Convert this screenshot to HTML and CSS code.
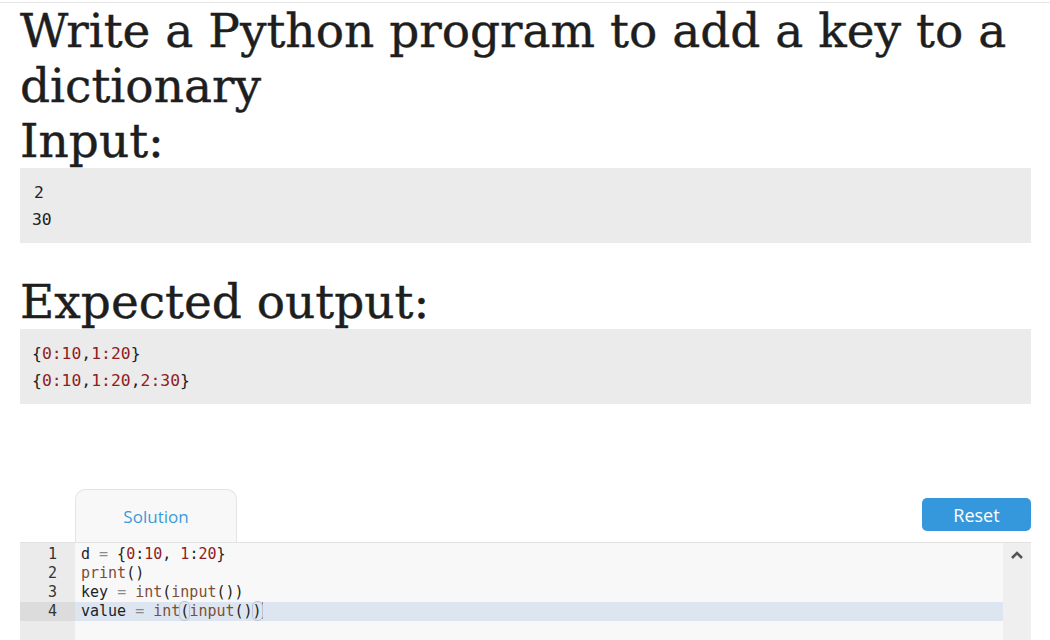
FILE: index.html
```html
<!DOCTYPE html>
<html>
<head>
<meta charset="utf-8">
<link rel="stylesheet" href="styles.css">
</head>
<body>
<div class="topline"></div>
<main class="page">
  <h1 class="title">Write a Python program to add a key to a dictionary</h1>
  <h2 class="heading">Input:</h2>
  <pre class="sample"><span class="pad2">2</span>
30</pre>
  <h2 class="heading spaced">Expected output:</h2>
  <pre class="sample"><span class="br">{</span><span class="num">0:10</span><span class="br">,</span><span class="num">1:20</span><span class="br">}</span>
<span class="br">{</span><span class="num">0:10</span><span class="br">,</span><span class="num">1:20</span><span class="br">,</span><span class="num">2:30</span><span class="br">}</span></pre>

  <section class="playground">
    <div class="tabbar">
      <div class="tab">Solution</div>
      <button class="reset">Reset</button>
    </div>
    <div class="editor">
      <div class="gutter">
        <div class="ln">1</div>
        <div class="ln">2</div>
        <div class="ln">3</div>
        <div class="ln active">4</div>
      </div>
      <div class="code">
        <div class="line">d <span class="op">=</span> {<span class="num">0</span>:<span class="num">10</span>, <span class="num">1</span>:<span class="num">20</span>}</div>
        <div class="line"><span class="fn">print</span>()</div>
        <div class="line">key <span class="op">=</span> <span class="fn">int</span>(<span class="fn">input</span>())</div>
        <div class="line active">value <span class="op">=</span> <span class="fn">int</span><span class="match">(</span><span class="fn">input</span>()<span class="match">)</span><span class="cursor"></span></div>
      </div>
      <div class="scrollbar">
        <svg class="chev" width="14" height="10" viewBox="0 0 14 10"><path d="M2 8 L7 3 L12 8" fill="none" stroke="#555" stroke-width="2.6"/></svg>
      </div>
    </div>
  </section>
</main>
</body>
</html>
```
FILE: styles.css
```css
html, body {
  margin: 0;
  padding: 0;
  background: #fff;
}
.topline {
  height: 2px;
  border-bottom: 1px solid #e6e6e6;
}
.page {
  padding: 0 19px 0 20px;
}
.title, .heading {
  font-family: "DejaVu Serif", "Liberation Serif", serif;
  font-weight: normal;
  font-size: 47px;
  line-height: 55px;
  color: #1e1e1e;
  margin: 0;
  -webkit-text-stroke: 0.4px #1e1e1e;
}
.heading.spaced {
  margin-top: 31px;
}
.sample {
  margin: 0;
  background: #ebebeb;
  font-family: "DejaVu Sans Mono", "Liberation Mono", monospace;
  font-size: 16.4px;
  line-height: 27px;
  color: #222;
  padding: 11px 12px 10px 12px;
  height: 54px;
}
.pad2 { padding-left: 2px; }
.sample .num { color: #8f1d22; }
.sample .br { color: #222; }

.playground {
  margin-top: 85px;
}
.tabbar {
  display: flex;
  justify-content: space-between;
  align-items: flex-end;
  padding-left: 55px;
}
.tab {
  width: 162px;
  height: 53px;
  box-sizing: border-box;
  border: 1px solid #e4e4e4;
  border-bottom: none;
  border-radius: 10px 10px 0 0;
  background: #f8f8f8;
  color: #3d9ad8;
  font-family: "Open Sans", Lato, sans-serif;
  font-size: 17px;
  display: flex;
  align-items: center;
  justify-content: center;
  padding-top: 0;
}
.reset {
  width: 109px;
  height: 33px;
  margin-bottom: 11px;
  border: none;
  border-radius: 5px;
  background: #3598dc;
  color: #fff;
  font-family: "Open Sans", Lato, sans-serif;
  font-size: 18px;
  padding: 0;
}
.editor {
  display: flex;
  border-top: 1px solid #e2e2e2;
  height: 110px;
  font-family: "DejaVu Sans Mono", "Liberation Mono", monospace;
  font-size: 15px;
  line-height: 19px;
}
.gutter {
  width: 55px;
  background: #ebebeb;
  padding-top: 2px;
  color: #333;
}
.ln {
  text-align: right;
  padding-right: 18px;
}
.ln.active { background: #dcdcdc; }
.code {
  flex: 1;
  background: #f8f8f8;
  padding-top: 2px;
  color: #1e1e1e;
}
.line {
  padding-left: 6px;
  white-space: pre;
}
.line.active { background: #dde6f0; }
.code .op { color: #8a8a8a; }
.code .num { color: #8f1d22; }
.code .fn { color: #7b4f3a; }
.match {
  outline: 1px solid #b9c3d6;
  border-radius: 4px;
}
.cursor {
  display: inline-block;
  width: 1px;
  height: 17px;
  background: #888;
  vertical-align: -3px;
}
.scrollbar {
  width: 28px;
  background: #efefef;
  display: flex;
  justify-content: center;
  align-items: flex-start;
  padding-top: 7px;
}
```
